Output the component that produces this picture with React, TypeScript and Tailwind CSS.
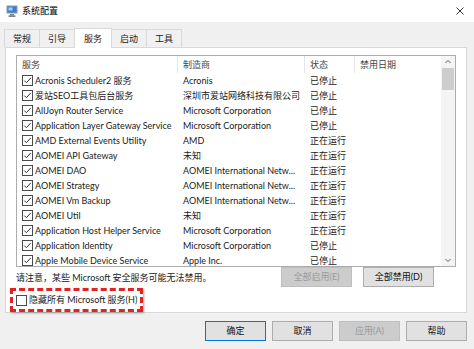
import React from "react";

const rows: [string, string, string][] = [
  ["Acronis Scheduler2 服务", "Acronis", "已停止"],
  ["爱站SEO工具包后台服务", "深圳市爱站网络科技有限公司", "已停止"],
  ["AllJoyn Router Service", "Microsoft Corporation", "已停止"],
  ["Application Layer Gateway Service", "Microsoft Corporation", "已停止"],
  ["AMD External Events Utility", "AMD", "正在运行"],
  ["AOMEI API Gateway", "未知", "正在运行"],
  ["AOMEI DAO", "AOMEI International Netw...", "正在运行"],
  ["AOMEI Strategy", "AOMEI International Netw...", "正在运行"],
  ["AOMEI Vm Backup", "AOMEI International Netw...", "正在运行"],
  ["AOMEI Util", "未知", "正在运行"],
  ["Application Host Helper Service", "Microsoft Corporation", "正在运行"],
  ["Application Identity", "Microsoft Corporation", "已停止"],
  ["Apple Mobile Device Service", "Apple Inc.", "已停止"],
];

function Check({ checked }: { checked: boolean }) {
  return (
    <svg width="11" height="11" viewBox="0 0 11 11" className="shrink-0">
      <rect x="0.5" y="0.5" width="10" height="10" fill="#fff" stroke="#4a4a4a" />
      {checked && <path d="M2.3 5.6 L4.4 7.7 L8.8 2.9" fill="none" stroke="#333" strokeWidth="1" />}
    </svg>
  );
}

function Btn({ label, disabled, primary, w }: { label: string; disabled?: boolean; primary?: boolean; w: string }) {
  return (
    <div
      className={`${w} h-[20px] flex items-center justify-center text-[9px] border ${
        disabled
          ? "bg-[#cccccc] border-[#bfbfbf] text-[#9a9a9a]"
          : primary
          ? "bg-[#e1e1e1] border-[#0078d7] text-[#111]"
          : "bg-[#e1e1e1] border-[#adadad] text-[#111]"
      }`}
    >
      {label}
    </div>
  );
}

export default function App() {
  return (
    <div className="w-[474px] h-[349px] bg-[#f0f0f0] flex flex-col overflow-hidden font-[Lato,'Noto_Sans_CJK_SC',sans-serif] text-[9px] text-[#1a1a1a]">
      {/* title bar */}
      <div className="h-[22px] bg-white flex items-center pl-[6px] pr-[10px] shrink-0">
        <svg width="12" height="12" viewBox="0 0 12 12">
          <rect x="0.5" y="0.5" width="11" height="8" fill="#8a9bb0" />
          <rect x="1.5" y="1.5" width="9" height="6" fill="#3d7fd1" />
          <rect x="2.5" y="2.5" width="4" height="3" fill="#9fd0ff" />
          <rect x="4" y="9" width="4" height="1.5" fill="#7b8794" />
          <rect x="2.5" y="10.5" width="7" height="1.3" fill="#5c6672" />
        </svg>
        <span className="ml-[4px] text-[9px] text-black">系统配置</span>
        <svg className="ml-auto" width="8" height="8" viewBox="0 0 8 8">
          <path d="M0.5 0.5 L7.5 7.5 M7.5 0.5 L0.5 7.5" stroke="#222" strokeWidth="0.9" />
        </svg>
      </div>

      {/* tabs */}
      <div className="flex items-end pl-[4px] mt-[6px] h-[19px] shrink-0 relative z-10">
        {["常规", "引导"].map((t) => (
          <div key={t} className="h-[18px] px-[8px] flex items-center border border-b-0 border-[#d9d9d9] -ml-px first:ml-0 bg-[#f0f0f0]">
            {t}
          </div>
        ))}
        <div className="h-[20px] px-[9px] -mb-px flex items-center border border-b-0 border-[#d9d9d9] bg-white -ml-px">服务</div>
        {["启动", "工具"].map((t) => (
          <div key={t} className="h-[18px] px-[8px] flex items-center border border-b-0 border-[#d9d9d9] -ml-px bg-[#f0f0f0]">
            {t}
          </div>
        ))}
      </div>

      {/* panel */}
      <div className="ml-[5px] w-[462px] h-[266px] bg-white border border-[#d9d9d9] shrink-0 flex flex-col pt-[7px] pl-[10px]">
        {/* list */}
        <div className="w-[440px] h-[213px] border border-[#adadad] flex overflow-hidden">
          <div className="flex-1 flex flex-col overflow-hidden">
            <div className="h-[17px] flex shrink-0 text-[#444]">
              <div className="w-[161px] pl-[5px] flex items-center border-r border-[#e5e5e5]">服务</div>
              <div className="w-[127px] pl-[5px] flex items-center border-r border-[#e5e5e5]">制造商</div>
              <div className="w-[50px] pl-[5px] flex items-center border-r border-[#e5e5e5]">状态</div>
              <div className="flex-1 pl-[5px] flex items-center">禁用日期</div>
            </div>
            {rows.map(([name, vendor, status]) => (
              <div key={name} className="h-[15px] flex items-center shrink-0 whitespace-nowrap">
                <div className="w-[161px] pl-[5px] flex items-center gap-[1px] overflow-hidden">
                  <Check checked />
                  <span className="ml-[1px]">{name}</span>
                </div>
                <div className="w-[127px] pl-[5px] overflow-hidden">{vendor}</div>
                <div className="w-[50px] pl-[5px]">{status}</div>
                <div className="flex-1" />
              </div>
            ))}
          </div>
          {/* scrollbar */}
          <div className="w-[14px] bg-[#f4f4f4] flex flex-col items-center shrink-0">
            <svg width="14" height="12" viewBox="0 0 14 12">
              <path d="M4.5 7 L7 4.5 L9.5 7" fill="none" stroke="#606060" strokeWidth="1" />
            </svg>
            <div className="w-[12px] h-[22px] bg-[#cdcdcd]" />
            <div className="flex-1" />
            <svg width="14" height="12" viewBox="0 0 14 12">
              <path d="M4.5 5 L7 7.5 L9.5 5" fill="none" stroke="#606060" strokeWidth="1" />
            </svg>
          </div>
        </div>

        {/* note + buttons */}
        <div className="flex items-center h-[20px] w-[418px]">
          <span className="pt-[2px]">请注意，某些 Microsoft 安全服务可能无法禁用。</span>
          <div className="ml-auto flex gap-[11px]">
            <Btn label="全部启用(E)" disabled w="w-[71px]" />
            <Btn label="全部禁用(D)" w="w-[71px]" />
          </div>
        </div>

        {/* hide ms */}
        <div className="-ml-[6px] mt-[1px] w-[133px] h-[24px] border-[3px] border-dashed border-[#e02424] flex items-center pl-[3px] shadow-[1px_1px_2px_rgba(0,0,0,0.35)]">
          <Check checked={false} />
          <span className="ml-[2px]">隐藏所有 Microsoft 服务(H)</span>
        </div>
      </div>

      {/* bottom buttons */}
      <div className="flex justify-end gap-[6px] mt-[8px] pr-[7px]">
        <Btn label="确定" primary w="w-[61px]" />
        <Btn label="取消" w="w-[61px]" />
        <Btn label="应用(A)" disabled w="w-[61px]" />
        <Btn label="帮助" w="w-[61px]" />
      </div>
    </div>
  );
}
